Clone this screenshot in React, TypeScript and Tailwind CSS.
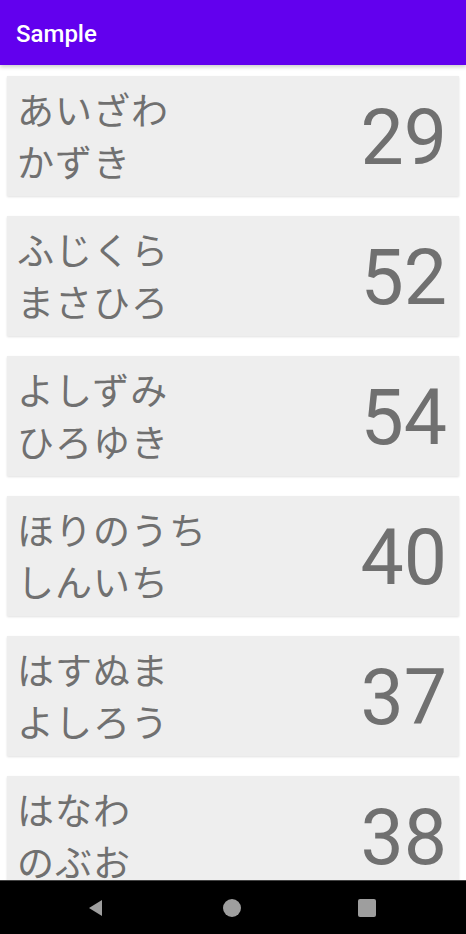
const people = [
  { first: 'あいざわ', last: 'かずき', age: 29 },
  { first: 'ふじくら', last: 'まさひろ', age: 52 },
  { first: 'よしずみ', last: 'ひろゆき', age: 54 },
  { first: 'ほりのうち', last: 'しんいち', age: 40 },
  { first: 'はすぬま', last: 'よしろう', age: 37 },
  { first: 'はなわ', last: 'のぶお', age: 38 },
];

export default function App() {
  return (
    <div className="h-[934px] w-[466px] flex flex-col bg-white overflow-hidden">
      <header className="h-[65px] shrink-0 bg-[#6200ee] flex items-center px-4 pt-[2px] shadow-[0_2px_4px_rgba(0,0,0,0.2)] z-10">
        <h1 className="text-white text-[24px] font-medium font-['Roboto',sans-serif]">Sample</h1>
      </header>

      <main className="flex-1 overflow-hidden pt-[11px] px-[7px] flex flex-col gap-[20px]">
        {people.map((p) => (
          <div
            key={p.first}
            className="h-[120px] shrink-0 bg-[#eeeeee] shadow-[0_1px_2px_rgba(0,0,0,0.12)] flex items-center justify-between pl-[10px] pr-[12px]"
          >
            <div className="text-[#707070] text-[37px] leading-[52px] tracking-[1px] font-['Noto_Sans_CJK_JP',sans-serif] pb-[2px]">
              <p>{p.first}</p>
              <p>{p.last}</p>
            </div>
            <p className="text-[#707070] text-[77px] leading-none font-['Roboto',sans-serif] pt-[4px]">{p.age}</p>
          </div>
        ))}
      </main>

      <nav className="h-[54px] shrink-0 bg-black flex items-center border-t border-[#444]">
        <div className="w-[190px] flex justify-center">
          <svg width="18" height="20" viewBox="0 0 18 20">
            <path d="M16 2 L3 10 L16 18 Z" fill="#9e9e9e" />
          </svg>
        </div>
        <div className="w-[84px] flex justify-center">
          <svg width="20" height="20" viewBox="0 0 20 20">
            <circle cx="10" cy="10" r="9" fill="#9e9e9e" />
          </svg>
        </div>
        <div className="w-[186px] flex justify-center">
          <svg width="20" height="20" viewBox="0 0 20 20">
            <rect x="1" y="1" width="18" height="18" rx="2" fill="#9e9e9e" />
          </svg>
        </div>
      </nav>
    </div>
  );
}
